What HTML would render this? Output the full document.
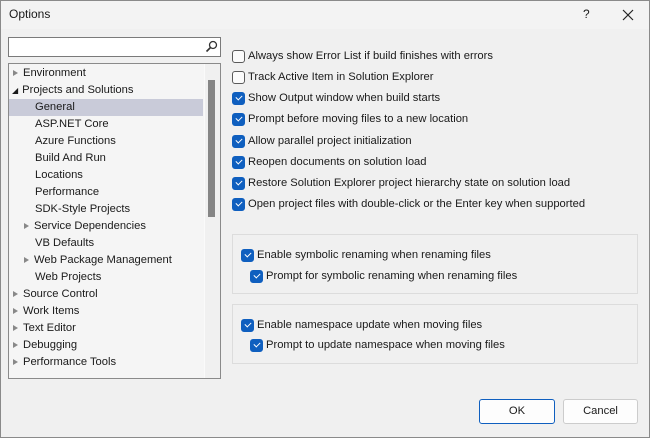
<!DOCTYPE html><html><head><style>
*{box-sizing:border-box;margin:0;padding:0}
body{width:650px;height:438px;background:#f0f0f0;font-family:"Liberation Sans",sans-serif;font-size:11.2px;color:#1a1a1a;position:relative;overflow:hidden;border:1px solid #8a8a8a}
.a{position:absolute;white-space:nowrap}
.title{left:0;top:0;width:648px;height:28px;background:#f3f3f3}
.tr{position:absolute;left:8px;width:194px;height:17px;line-height:17px}
.ar{display:inline-block;width:0;height:0;border-left:5px solid #888;border-top:3.5px solid transparent;border-bottom:3.5px solid transparent;margin:0 5px 0 4px;vertical-align:0}
.cb{position:absolute;width:13px;height:13px;border-radius:3px}
.on{background:#0f5fbf;border:1px solid #0f5fbf}
.on::after{content:"";position:absolute;left:3px;top:2px;width:5px;height:3px;border-left:1px solid #fff;border-bottom:1px solid #fff;transform:rotate(-45deg)}
.off{border:1px solid #5a5a5a;background:#fbfbfb}
.lb{position:absolute;line-height:14px}
.grp{position:absolute;left:231px;width:406px;border:1px solid #dcdcdc}
.btn{position:absolute;top:398px;height:25px;background:#fdfdfd;border:1px solid #ccc;border-radius:3px;text-align:center;line-height:23px}
</style></head><body>
<div class="a title"></div>
<div class="a" style="left:8px;top:6px;font-size:12px">Options</div>
<div class="a" style="left:582px;top:6px;font-size:12px">?</div>
<svg class="a" style="left:621px;top:8px" width="12" height="12"><path d="M1 1L11 11M11 1L1 11" stroke="#222" stroke-width="1.2"/></svg>
<div class="a" style="left:7px;top:36px;width:213px;height:20px;background:#fff;border:1px solid #7a7a7a"></div>
<svg class="a" style="left:204px;top:39px" width="13" height="13"><circle cx="8" cy="5" r="3.5" fill="none" stroke="#333" stroke-width="1.3"/><path d="M5.5 7.5L1.5 11.5" stroke="#333" stroke-width="1.6"/></svg>
<div class="a" style="left:7px;top:62px;width:213px;height:316px;background:#f5f5f5;border:1px solid #8a8a8a"></div>
<div class="a" style="left:203px;top:63px;width:16px;height:314px;background:#f0f0f0;border-left:1px solid #fafafa"></div>
<div class="a" style="left:207px;top:79px;width:7px;height:137px;background:#858585"></div>
<div class="a" style="left:8px;top:98px;width:194px;height:17px;background:#c9cbd9"></div>
<div style="position:absolute;left:0;top:64px">
<div class="tr" style="top:0"><span class="ar"></span>Environment</div>
<div class="tr" style="top:17px"><span style="font-size:8px;margin:0 4px 0 3px">◢</span>Projects and Solutions</div>
<div class="tr" style="top:34px;padding-left:26px">General</div>
<div class="tr" style="top:51px;padding-left:26px">ASP.NET Core</div>
<div class="tr" style="top:68px;padding-left:26px">Azure Functions</div>
<div class="tr" style="top:85px;padding-left:26px">Build And Run</div>
<div class="tr" style="top:102px;padding-left:26px">Locations</div>
<div class="tr" style="top:119px;padding-left:26px">Performance</div>
<div class="tr" style="top:136px;padding-left:26px">SDK-Style Projects</div>
<div class="tr" style="top:153px;padding-left:11px"><span class="ar"></span>Service Dependencies</div>
<div class="tr" style="top:170px;padding-left:26px">VB Defaults</div>
<div class="tr" style="top:187px;padding-left:11px"><span class="ar"></span>Web Package Management</div>
<div class="tr" style="top:204px;padding-left:26px">Web Projects</div>
<div class="tr" style="top:221px"><span class="ar"></span>Source Control</div>
<div class="tr" style="top:238px"><span class="ar"></span>Work Items</div>
<div class="tr" style="top:255px"><span class="ar"></span>Text Editor</div>
<div class="tr" style="top:272px"><span class="ar"></span>Debugging</div>
<div class="tr" style="top:289px"><span class="ar"></span>Performance Tools</div>
</div>
<div class="cb off" style="left:231px;top:49px"></div><div class="lb" style="left:247px;top:48px">Always show Error List if build finishes with errors</div>
<div class="cb off" style="left:231px;top:70px"></div><div class="lb" style="left:247px;top:69px">Track Active Item in Solution Explorer</div>
<div class="cb on" style="left:231px;top:91px"></div><div class="lb" style="left:247px;top:90px">Show Output window when build starts</div>
<div class="cb on" style="left:231px;top:112px"></div><div class="lb" style="left:247px;top:111px">Prompt before moving files to a new location</div>
<div class="cb on" style="left:231px;top:134px"></div><div class="lb" style="left:247px;top:133px">Allow parallel project initialization</div>
<div class="cb on" style="left:231px;top:155px"></div><div class="lb" style="left:247px;top:154px">Reopen documents on solution load</div>
<div class="cb on" style="left:231px;top:176px"></div><div class="lb" style="left:247px;top:175px">Restore Solution Explorer project hierarchy state on solution load</div>
<div class="cb on" style="left:231px;top:197px"></div><div class="lb" style="left:247px;top:196px">Open project files with double-click or the Enter key when supported</div>
<div class="grp" style="top:233px;height:60px"></div>
<div class="cb on" style="left:240px;top:248px"></div><div class="lb" style="left:256px;top:247px">Enable symbolic renaming when renaming files</div>
<div class="cb on" style="left:249px;top:269px"></div><div class="lb" style="left:265px;top:268px">Prompt for symbolic renaming when renaming files</div>
<div class="grp" style="top:303px;height:60px"></div>
<div class="cb on" style="left:240px;top:318px"></div><div class="lb" style="left:256px;top:317px">Enable namespace update when moving files</div>
<div class="cb on" style="left:249px;top:338px"></div><div class="lb" style="left:265px;top:337px">Prompt to update namespace when moving files</div>
<div class="btn" style="left:478px;width:76px;border-color:#0f5fbf">OK</div>
<div class="btn" style="left:562px;width:75px">Cancel</div>
</body></html>
